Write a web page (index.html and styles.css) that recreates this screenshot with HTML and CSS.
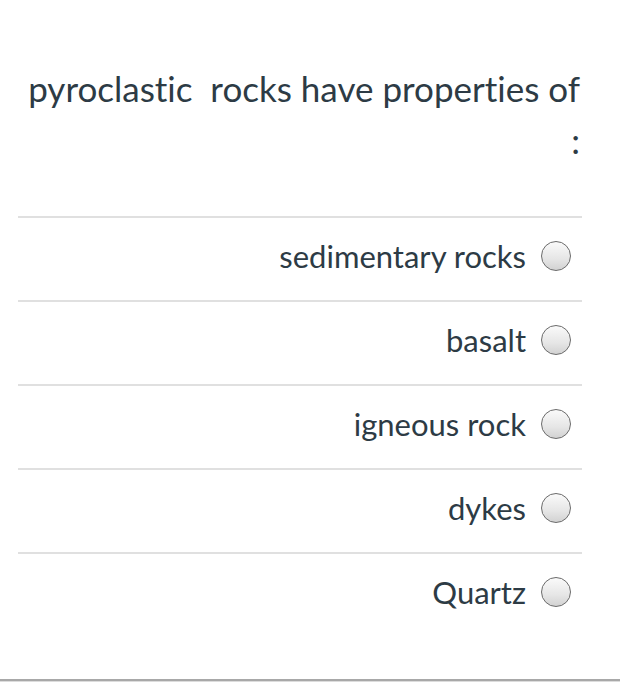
FILE: index.html
```html
<!DOCTYPE html>
<html>
<head>
<meta charset="utf-8">
<link rel="stylesheet" href="styles.css">
</head>
<body>
<div class="question">
  <div class="title">pyroclastic&nbsp; rocks have properties of :</div>
  <div class="options">
    <div class="option"><span class="label">sedimentary rocks</span><span class="radio"></span></div>
    <div class="option"><span class="label">basalt</span><span class="radio"></span></div>
    <div class="option"><span class="label">igneous rock</span><span class="radio"></span></div>
    <div class="option"><span class="label">dykes</span><span class="radio"></span></div>
    <div class="option"><span class="label">Quartz</span><span class="radio"></span></div>
  </div>
</div>
<div class="footer-line"></div>
</body>
</html>
```
FILE: styles.css
```css
html, body {
  margin: 0;
  padding: 0;
  background: #ffffff;
}
body {
  font-family: Lato, "Open Sans", sans-serif;
  font-variant-ligatures: none;
  color: #2d3b45;
  width: 620px;
  height: 700px;
}
.question {
  padding: 62px 38px 0 18px;
  height: 618px;
  box-sizing: border-box;
}
.title {
  font-size: 35px;
  line-height: 52px;
  text-align: right;
  padding-left: 6px;
  padding-right: 2px;
  margin-bottom: 50px;
}
.option {
  border-top: 2px solid #e0e0e0;
  height: 82px;
  box-sizing: content-box;
  display: flex;
  justify-content: flex-end;
  align-items: center;
  gap: 15px;
  padding-right: 11px;
  padding-bottom: 0;
}
.option > * {
  margin-bottom: 6px;
}
.label {
  font-size: 31px;
}
.radio {
  width: 28px;
  height: 28px;
  border-radius: 50%;
  border: 1.5px solid #6b6b6b;
  background: linear-gradient(180deg, #fafafa 0%, #e6e6e6 60%, #d2d2d2 100%);
}
.footer-line {
  margin-top: 61px;
  height: 2px;
  background: #a8a8a8;
  border-bottom: 1px solid #dcdcdc;
}
```
